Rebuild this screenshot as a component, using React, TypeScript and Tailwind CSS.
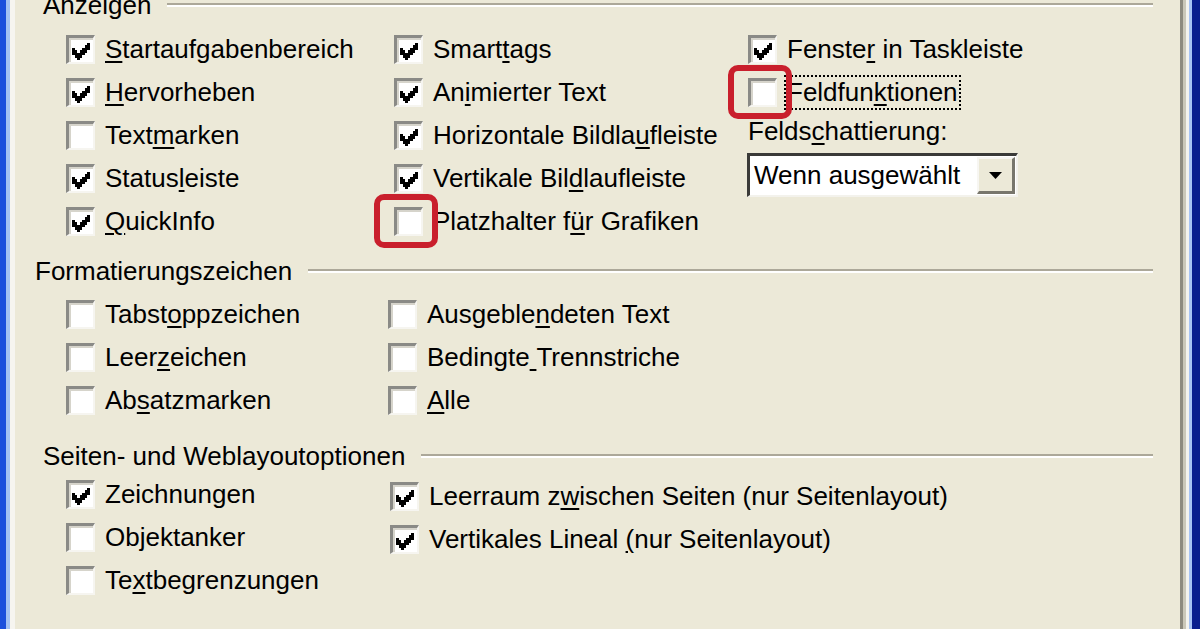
import React from 'react';

type Item = {
  pre?: string;
  k?: string;
  post?: string;
  checked?: boolean;
  ring?: boolean;
  focus?: boolean;
};

const CheckMark = () => (
  <svg
    width="18"
    height="17"
    viewBox="0 0 7 7"
    preserveAspectRatio="none"
    shapeRendering="crispEdges"
    className="absolute left-[3px] top-[5px]"
  >
    <path
      fill="#000"
      d="M6 0h1v1h-1z M5 1h2v1h-2z M0 2h1v1h-1z M4 2h3v1h-3z M0 3h2v1h-2z M3 3h3v1h-3z M0 4h5v1h-5z M1 5h3v1h-3z M2 6h1v1h-1z"
    />
  </svg>
);

const Box: React.FC<{ checked?: boolean; ring?: boolean }> = ({ checked, ring }) => (
  <div className="relative h-[29px] w-[29px] shrink-0">
    <div className="relative h-full w-full border-t-[3px] border-l-[3px] border-r-2 border-b-2 border-t-[#8a8a86] border-l-[#8a8a86] border-r-[#f6f5f0] border-b-[#f6f5f0] bg-white shadow-[inset_2px_2px_0_#d6d4cb]">
      {checked && <CheckMark />}
    </div>
    {ring && (
      <div className="absolute -left-[20px] -top-[13px] h-[54px] w-[64px] rounded-[10px] border-[6px] border-[#c91f2c]" />
    )}
  </div>
);

const Label: React.FC<{ item: Item }> = ({ item }) => (
  <span
    className={
      item.focus
        ? '-ml-[3px] whitespace-pre border-2 border-dotted border-black px-[1px] leading-[31px]'
        : 'whitespace-pre'
    }
  >
    {item.pre}
    {item.k && <span className="underline decoration-2 underline-offset-[3px]">{item.k}</span>}
    {item.post}
  </span>
);

const Row: React.FC<{ item: Item }> = ({ item }) => (
  <div className="flex h-[43px] items-center gap-[10px]">
    <Box checked={item.checked} ring={item.ring} />
    <Label item={item} />
  </div>
);

const Header: React.FC<{ title: string; pl: string; className?: string }> = ({ title, pl, className }) => (
  <div className={`flex h-[30px] items-center pr-[27px] ${pl} ${className ?? ''}`}>
    <span className="whitespace-pre">{title}</span>
    <div className="ml-[16px] flex-1 border-t-2 border-b-2 border-t-[#aca899] border-b-white" />
  </div>
);

const anzeigen1: Item[] = [
  { k: 'S', post: 'tartaufgabenbereich', checked: true },
  { k: 'H', post: 'ervorheben', checked: true },
  { pre: 'Text', k: 'm', post: 'arken' },
  { pre: 'Status', k: 'l', post: 'eiste', checked: true },
  { k: 'Q', post: 'uickInfo', checked: true },
];

const anzeigen2: Item[] = [
  { pre: 'Smart', k: 't', post: 'ags', checked: true },
  { pre: 'An', k: 'i', post: 'mierter Text', checked: true },
  { pre: 'Horizontale Bildla', k: 'u', post: 'fleiste', checked: true },
  { pre: 'Vertikale Bil', k: 'd', post: 'laufleiste', checked: true },
  { pre: 'Platzhalter f', k: 'ü', post: 'r Grafiken', ring: true },
];

const format1: Item[] = [
  { pre: 'Tabst', k: 'o', post: 'ppzeichen' },
  { pre: 'Leer', k: 'z', post: 'eichen' },
  { pre: 'Ab', k: 's', post: 'atzmarken' },
];

const format2: Item[] = [
  { pre: 'Ausgeble', k: 'n', post: 'deten Text' },
  { pre: 'Bedingte', k: ' ', post: 'Trennstriche' },
  { k: 'A', post: 'lle' },
];

const layout1: Item[] = [
  { pre: 'Zeichnungen', checked: true },
  { pre: 'Ob', k: 'j', post: 'ektanker' },
  { pre: 'Te', k: 'x', post: 'tbegrenzungen' },
];

const layout2: Item[] = [
  { pre: 'Leerraum z', k: 'w', post: 'ischen Seiten (nur Seitenlayout)', checked: true },
  { pre: 'Vertikales Lineal ', k: '(', post: 'nur Seitenlayout)', checked: true },
];

const Column: React.FC<{ items: Item[]; className?: string }> = ({ items, className }) => (
  <div className={`flex flex-col ${className ?? ''}`}>
    {items.map((it, i) => (
      <Row key={i} item={it} />
    ))}
  </div>
);

export default function App() {
  return (
    <div
      className="flex h-[629px] w-[1200px] overflow-hidden bg-[#ece9d8] text-[26px] text-black"
      style={{ fontFamily: '"Liberation Sans", Arial, sans-serif' }}
    >
      <div className="w-[6px] bg-[#1b50dc]" />
      <div className="w-[4px] bg-[#a3c2f3]" />
      <div className="w-[5px] bg-[#f6f5f0]" />

      <div className="flex flex-1 flex-col">
        {/* Anzeigen */}
        <Header title="Anzeigen" pl="pl-[28px]" className="-mt-[10px]" />
        <div className="mt-[8px] grid grid-cols-[328px_354px_1fr] pl-[51px]">
          <Column items={anzeigen1} />
          <Column items={anzeigen2} />
          <div className="flex flex-col">
            <Row item={{ pre: 'Fenste', k: 'r', post: ' in Taskleiste', checked: true }} />
            <Row item={{ pre: 'Feldfun', k: 'k', post: 'tionen', ring: true, focus: true }} />
            <div className="mt-[2px] flex h-[30px] items-center">
              <span>
                Felds<span className="underline decoration-2 underline-offset-[3px]">c</span>hattierung:
              </span>
            </div>
            <div className="-ml-[1px] mt-[7px] flex h-[44px] w-[271px] border-t-[3px] border-l-[3px] border-r-2 border-b-2 border-t-[#3a3a38] border-l-[#3a3a38] border-r-[#f3f2ec] border-b-[#f3f2ec] bg-white">
              <div className="flex flex-1 items-center pl-[4px]">Wenn ausgewählt</div>
              <div className="my-[1px] mr-[1px] flex w-[38px] items-center justify-center border-t-2 border-l-2 border-r-[3px] border-b-[3px] border-t-[#f7f6f2] border-l-[#f7f6f2] border-r-[#78766c] border-b-[#78766c] bg-[#ece9d8]">
                <svg width="13" height="7" viewBox="0 0 13 7">
                  <path d="M0 0h13L6.5 7z" fill="#000" />
                </svg>
              </div>
            </div>
          </div>
        </div>

        {/* Formatierungszeichen */}
        <Header title="Formatierungszeichen" pl="pl-[20px]" className="mt-[13px]" />
        <div className="mt-[7px] grid grid-cols-[322px_1fr] pl-[51px]">
          <Column items={format1} />
          <Column items={format2} />
        </div>

        {/* Seiten- und Weblayoutoptionen */}
        <Header title="Seiten- und Weblayoutoptionen" pl="pl-[28px]" className="mt-[19px]" />
        <div className="mt-[2px] grid grid-cols-[324px_1fr] pl-[51px]">
          <Column items={layout1} />
          <Column items={layout2} className="mt-[2px]" />
        </div>
      </div>

      <div className="w-[3px] bg-[#8d8a7f]" />
      <div className="w-[3px] bg-[#cac7b9]" />
      <div className="w-[3px] bg-[#f4f3ee]" />
      <div className="w-[3px] bg-[#a8c4f4]" />
      <div className="w-[8px] bg-[#0a1f8e]" />
    </div>
  );
}
